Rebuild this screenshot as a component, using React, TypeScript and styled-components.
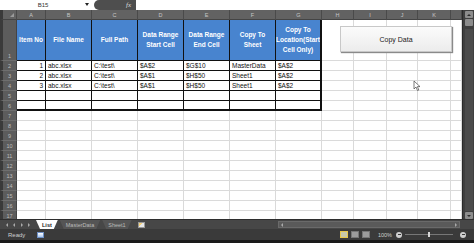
import React from 'react';
import styled, { createGlobalStyle } from 'styled-components';

const GlobalStyle = createGlobalStyle`
  html, body {
    margin: 0;
    padding: 0;
    background: #1e1e1e;
    overflow: hidden;
  }
  * {
    box-sizing: border-box;
  }
`;

const Window = styled.div`
  width: 474px;
  height: 243px;
  display: flex;
  flex-direction: column;
  background: #2b2b2b;
  font-family: "Liberation Sans", Arial, sans-serif;
  overflow: hidden;
`;

const FormulaBar = styled.div`
  height: 10px;
  display: flex;
  align-items: stretch;
  background: #ffffff;
  padding-right: 12px;
`;

const NameBox = styled.div`
  width: 94px;
  display: flex;
  align-items: center;
  justify-content: center;
  position: relative;
  font-size: 6px;
  color: #333;
  padding-right: 8px;
`;

const NameArrow = styled.span`
  position: absolute;
  right: 5px;
  top: 3px;
  width: 0;
  height: 0;
  border-left: 2px solid transparent;
  border-right: 2px solid transparent;
  border-top: 3px solid #222;
`;

const FxArea = styled.div`
  width: 42px;
  background: #4e4e4e;
  display: flex;
  align-items: center;
  justify-content: flex-end;
  padding-right: 5px;
  border-radius: 5px 0 0 5px;
  font-family: "Liberation Serif", serif;
  font-style: italic;
  font-size: 7px;
  color: #dcdcdc;
`;

const FormulaInput = styled.div`
  flex: 1;
  background: #ffffff;
`;

const Body = styled.div`
  height: 209px;
  display: flex;
`;

const SheetArea = styled.div`
  position: relative;
  width: 462px;
  height: 209px;
  overflow: hidden;
  background: #ffffff;
`;

const Grid = styled.div`
  display: grid;
  grid-template-columns: 17px 29px 46px 46px 46px 46px 46px 46px 32px 33px 31px 33px 11px;
  grid-template-rows: 10px 41px repeat(16, 10px);
`;

const ColHead = styled.div`
  background: #626262;
  border-right: 1px solid #4a4a4a;
  border-bottom: 1px solid #444;
  color: #c6c6c6;
  font-size: 5.5px;
  display: flex;
  align-items: center;
  justify-content: center;
`;

const Corner = styled(ColHead)`
  position: relative;
  border-left: 3px solid #3a3a3a;
  &::after {
    content: '';
    position: absolute;
    right: 2px;
    bottom: 2px;
    border-left: 4px solid transparent;
    border-bottom: 4px solid #9a9a9a;
  }
`;

const RowHead = styled.div`
  background: #5c5c5c;
  border-left: 3px solid #3a3a3a;
  border-right: 1px solid #444;
  border-bottom: 1px solid #6e6e6e;
  color: #bdbdbd;
  font-size: 5.5px;
  display: flex;
  align-items: flex-end;
  justify-content: center;
  padding-bottom: 1px;
`;

const Cell = styled.div<{ $right?: boolean }>`
  border-right: 1px solid #dadada;
  border-bottom: 1px solid #dadada;
  font-size: 6.5px;
  color: #111;
  white-space: nowrap;
  overflow: hidden;
  display: flex;
  align-items: center;
  justify-content: ${(p) => (p.$right ? 'flex-end' : 'flex-start')};
  padding: 0 2px;
`;

const TableCell = styled(Cell)<{ $lastCol?: boolean; $lastRow?: boolean }>`
  border-right: ${(p) => (p.$lastCol ? '2px' : '1px')} solid #111;
  border-bottom: ${(p) => (p.$lastRow ? '2px' : '1px')} solid #111;
`;

const HeaderCell = styled(TableCell)`
  background: #4884cf;
  color: #ffffff;
  font-weight: bold;
  justify-content: center;
  text-align: center;
  white-space: normal;
  line-height: 10px;
  padding: 0 1px;
`;

const CopyButton = styled.div`
  position: absolute;
  left: 340px;
  top: 16px;
  width: 112px;
  height: 26px;
  background: linear-gradient(#fbfbfb, #ececec);
  border: 1px solid #c8c8c8;
  box-shadow: 1px 1px 1px #8a8a8a;
  display: flex;
  align-items: center;
  justify-content: center;
  font-size: 7px;
  color: #222;
`;

const Cursor = styled.svg`
  position: absolute;
  left: 413px;
  top: 70px;
`;

const VScroll = styled.div`
  width: 12px;
  background: #3f3f3f;
  display: flex;
  flex-direction: column;
  align-items: center;
  gap: 1px;
  padding-top: 1px;
  border-left: 1px solid #2a2a2a;
`;

const ScrollBtn = styled.div`
  width: 8px;
  height: 7px;
  background: #8c8c8c;
  border-radius: 1px;
  display: flex;
  align-items: center;
  justify-content: center;
`;

const ScrollTrack = styled.div`
  flex: 1;
  width: 8px;
  background: #4b4b4b;
  margin-top: 2px;
`;

const Arrow = styled.span<{ $dir: 'up' | 'down' | 'left' | 'right' }>`
  width: 0;
  height: 0;
  border: 2px solid transparent;
  ${(p) =>
    p.$dir === 'up'
      ? 'border-bottom: 2px solid #2a2a2a; border-top-width: 0;'
      : p.$dir === 'down'
      ? 'border-top: 2px solid #2a2a2a; border-bottom-width: 0;'
      : p.$dir === 'left'
      ? 'border-right: 2px solid #aaa; border-left-width: 0;'
      : 'border-left: 2px solid #aaa; border-right-width: 0;'}
`;

const TabBar = styled.div`
  height: 10px;
  display: flex;
  align-items: stretch;
  background: #474747;
  border-top: 1px solid #2e2e2e;
`;

const TabNav = styled.div`
  width: 36px;
  display: flex;
  align-items: center;
  justify-content: space-around;
  padding: 0 3px;
`;

const Tab = styled.div<{ $active?: boolean }>`
  padding: 0 6px;
  margin-right: 2px;
  display: flex;
  align-items: center;
  font-size: 5.5px;
  color: ${(p) => (p.$active ? '#222' : '#bbbbbb')};
  font-weight: ${(p) => (p.$active ? 'bold' : 'normal')};
  background: ${(p) => (p.$active ? '#ffffff' : '#555555')};
  clip-path: polygon(0 0, 100% 0, calc(100% - 4px) 100%, 4px 100%);
`;

const NewSheet = styled.div`
  width: 7px;
  height: 6px;
  margin: 2px 0 0 4px;
  background: linear-gradient(135deg, #f5d27a 0 40%, #e8e8e8 40%);
  border: 1px solid #999;
`;

const TabSpacer = styled.div`
  flex: 1;
`;

const HScroll = styled.div`
  width: 182px;
  margin: 1px 14px 1px 0;
  background: #5a5a5a;
  border: 1px solid #6a6a6a;
  display: flex;
  align-items: center;
  justify-content: space-between;
  padding: 0 2px;
`;

const StatusBar = styled.div`
  height: 11px;
  display: flex;
  align-items: center;
  background: #3a3a3a;
  padding: 0 8px;
  font-size: 6px;
  color: #d0d0d0;
`;

const MacroIcon = styled.div`
  width: 7px;
  height: 6px;
  margin-left: 12px;
  background: linear-gradient(#ffffff, #a7c6ef);
  border: 1px solid #6d8fc4;
`;

const ViewButtons = styled.div`
  margin-left: auto;
  display: flex;
  gap: 3px;
  align-items: center;
`;

const ViewBtn = styled.div<{ $active?: boolean }>`
  width: 8px;
  height: 7px;
  background: ${(p) => (p.$active ? '#c9c9a8' : '#9c9c9c')};
  border: 1px solid ${(p) => (p.$active ? '#e7c84a' : '#777')};
`;

const Zoom = styled.span`
  margin-left: 8px;
  font-size: 5.5px;
`;

const ZoomCircle = styled.div`
  width: 6px;
  height: 6px;
  border-radius: 50%;
  background: #cfcfcf;
  display: flex;
  align-items: center;
  justify-content: center;
  margin-left: 4px;
  &::after {
    content: '';
    width: 3px;
    height: 1px;
    background: #3a3a3a;
  }
`;

const Slider = styled.div`
  width: 48px;
  height: 1px;
  background: #777;
  margin: 0 3px;
  display: flex;
  justify-content: center;
  align-items: center;
  &::after {
    content: '';
    width: 2px;
    height: 5px;
    background: #d8d8d8;
  }
`;

const BottomEdge = styled.div`
  flex: 1;
  background: #1a1a1a;
`;

const columns = ['A', 'B', 'C', 'D', 'E', 'F', 'G', 'H', 'I', 'J', 'K', ''];

const headers: React.ReactNode[] = [
  'Item No',
  'File Name',
  'Full Path',
  <>Data Range<br />Start Cell</>,
  <>Data Range<br />End Cell</>,
  <>Copy To<br />Sheet</>,
  <>Copy To<br />Location(Start<br />Cell Only)</>,
];

const data: string[][] = [
  ['1', 'abc.xlsx', 'C:\\test\\', '$A$2', '$G$10', 'MasterData', '$A$2'],
  ['2', 'abc.xlsx', 'C:\\test\\', '$A$1', '$H$50', 'Sheet1', '$A$2'],
  ['3', 'abc.xlsx', 'C:\\test\\', '$A$1', '$H$50', 'Sheet1', '$A$2'],
  ['', '', '', '', '', '', ''],
  ['', '', '', '', '', '', ''],
];

const App: React.FC = () => {
  const rows: React.ReactNode[] = [];

  // row 1: table header
  rows.push(<RowHead key="rh1">1</RowHead>);
  headers.forEach((h, i) => (
    rows.push(
      <HeaderCell key={`h${i}`} $lastCol={i === 6}>
        <span>{h}</span>
      </HeaderCell>
    )
  ));
  for (let c = 7; c < 12; c++) rows.push(<Cell key={`r1c${c}`} />);

  // rows 2-6: table body
  data.forEach((r, ri) => {
    rows.push(<RowHead key={`rh${ri + 2}`}>{ri + 2}</RowHead>);
    r.forEach((v, ci) => (
      rows.push(
        <TableCell
          key={`t${ri}-${ci}`}
          $right={ci === 0}
          $lastCol={ci === 6}
          $lastRow={ri === data.length - 1}
        >
          {v}
        </TableCell>
      )
    ));
    for (let c = 7; c < 12; c++) rows.push(<Cell key={`r${ri}c${c}`} />);
  });

  // rows 7-17: empty
  for (let r = 7; r <= 17; r++) {
    rows.push(<RowHead key={`rh${r}`}>{r}</RowHead>);
    for (let c = 0; c < 12; c++) rows.push(<Cell key={`e${r}-${c}`} />);
  }

  return (
    <>
      <GlobalStyle />
      <Window>
        <FormulaBar>
          <NameBox>
            B15
            <NameArrow />
          </NameBox>
          <FxArea>fx</FxArea>
          <FormulaInput />
        </FormulaBar>
        <Body>
          <SheetArea>
            <Grid>
              <Corner />
              {columns.map((c, i) => (
                <ColHead key={`c${i}`}>{c}</ColHead>
              ))}
              {rows}
            </Grid>
            <CopyButton>Copy Data</CopyButton>
            <Cursor width="8" height="12" viewBox="0 0 8 12">
              <path d="M1 1 L1 9 L3 7 L4.5 10.5 L5.8 10 L4.4 6.6 L7 6.6 Z" fill="#fff" stroke="#444" strokeWidth="0.7" />
            </Cursor>
          </SheetArea>
          <VScroll>
            <ScrollBtn><Arrow $dir="up" /></ScrollBtn>
            <ScrollBtn />
            <ScrollTrack />
            <ScrollBtn><Arrow $dir="down" /></ScrollBtn>
          </VScroll>
        </Body>
        <TabBar>
          <TabNav>
            <Arrow $dir="left" />
            <Arrow $dir="left" />
            <Arrow $dir="right" />
            <Arrow $dir="right" />
          </TabNav>
          <Tab $active>List</Tab>
          <Tab>MasterData</Tab>
          <Tab>Sheet1</Tab>
          <NewSheet />
          <TabSpacer />
          <HScroll>
            <Arrow $dir="left" />
            <Arrow $dir="right" />
          </HScroll>
        </TabBar>
        <StatusBar>
          Ready
          <MacroIcon />
          <ViewButtons>
            <ViewBtn $active />
            <ViewBtn />
            <ViewBtn />
          </ViewButtons>
          <Zoom>100%</Zoom>
          <ZoomCircle />
          <Slider />
          <ZoomCircle />
        </StatusBar>
        <BottomEdge />
      </Window>
    </>
  );
};

export default App;
